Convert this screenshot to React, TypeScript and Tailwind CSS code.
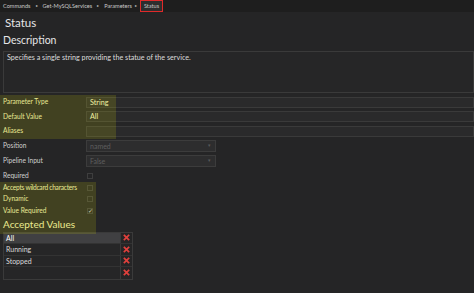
import React from "react";

const font = { fontFamily: 'Lato, "Open Sans", sans-serif' };

function Row({ label, value, hl }: { label: string; value?: string; hl?: boolean }) {
  return (
    <div className="flex items-center h-[14.5px]">
      <div className={`w-[86px] pl-[3px] text-[6.6px] ${hl ? "text-[#e4e4a8]" : "text-[#cfcfcf]"}`}>{label}</div>
      <div className={`flex-1 h-[11px] border border-[#3a3a3a] bg-[#2a2a2b] text-[7.2px] pl-[3px] leading-[9px] ${hl ? "text-[#eeeeb8]" : "text-[#d8d8d8]"}`}>{value}</div>
    </div>
  );
}

function Select({ label, value }: { label: string; value: string }) {
  return (
    <div className="flex items-center h-[15px]">
      <div className="w-[86px] pl-[3px] text-[6.6px] text-[#cfcfcf]">{label}</div>
      <div className="w-[130px] h-[12px] border border-[#3c3c3c] bg-[#2d2d2e] text-[7px] pl-[3px] text-[#5e5e5e] flex items-center justify-between pr-[4px]">
        <span>{value}</span>
        <span className="text-[5px] text-[#5a5a5a]">▾</span>
      </div>
    </div>
  );
}

function Check({ label, checked, hl }: { label: string; checked?: boolean; hl?: boolean }) {
  return (
    <div className="flex items-center h-[11.5px]">
      <div className={`w-[86px] pl-[3px] text-[6.6px] whitespace-nowrap overflow-hidden ${hl ? "text-[#e4e4a8]" : "text-[#cfcfcf]"} ${label.length > 20 ? "tracking-[-0.25px]" : ""}`}>{label}</div>
      <div className="ml-[1px] w-[6px] h-[6px] border border-[#3e3e3e] flex items-center justify-center text-[6px] text-[#cfcfcf] leading-none">
        {checked ? "✓" : ""}
      </div>
    </div>
  );
}

function XIcon() {
  return (
    <svg width="7" height="7" viewBox="0 0 10 10">
      <path d="M2 2 L8 8 M8 2 L2 8" stroke="#e0403c" strokeWidth="2.4" strokeLinecap="square" />
    </svg>
  );
}

export default function App() {
  const values = ["All", "Running", "Stopped", ""];
  return (
    <div className="w-[474px] h-[293px] bg-[#252526] text-[#d4d4d4] overflow-hidden relative" style={font}>
      {/* breadcrumb */}
      <div className="h-[12px] bg-[#1e1e1e] flex items-center text-[5.6px] text-[#c8c8c8] pl-[3px]">
        <span>Commands</span>
        <span className="text-[4px] mx-[5px]">▸</span>
        <span>Get-MySQLServices</span>
        <span className="text-[4px] mx-[5px]">▸</span>
        <span>Parameters</span>
        <span className="text-[4px] mx-[3px]">▸</span>
        <span className="border-[1.5px] border-[#e02a2a] px-[3px] h-[12px] flex items-center bg-[#2e2e2e]">Status</span>
      </div>
      {/* header */}
      <div className="text-[11.5px] leading-[18px] pl-[5px] pt-[2px] text-[#e6e6e6]">Status</div>
      <div className="text-[10.5px] leading-[16px] pl-[3px] text-[#e6e6e6]">Description</div>
      <div className="mt-[3px] ml-[3px] h-[42px] border border-[#3a3a3a] bg-[#262627] text-[7.2px] pl-[3px] pt-[1px] text-[#dcdcdc]">
        Specifies a single string providing the statue of the service.
      </div>
      <div className="mt-[2px] relative">
        <div className="absolute left-0 top-0 w-[116px] h-[44px] bg-[#ffff00]/[0.13] pointer-events-none" />
        <Row label="Parameter Type" value="String" hl />
        <Row label="Default Value" value="All" hl />
        <Row label="Aliases" value="" hl />
        <Select label="Position" value="named" />
        <Select label="Pipeline Input" value="False" />
      </div>
      <div className="mt-[2px] relative">
        <div className="absolute left-0 top-[11px] w-[96px] h-[52px] bg-[#ffff00]/[0.13] pointer-events-none" />
        <Check label="Required" />
        <Check label="Accepts wildcard characters" hl />
        <Check label="Dynamic" hl />
        <Check label="Value Required" checked hl />
        <div className="text-[10px] leading-[15px] pl-[3px] text-[#e8e8a4]">Accepted Values</div>
      </div>
      <div className="ml-[3px] w-[130px] border border-[#3a3a3a]">
        {values.map((v, i) => (
          <div key={i} className="flex h-[11.5px] border-b border-[#333] last:border-b-0">
            <div className={`flex-1 text-[7px] pl-[2px] leading-[11px] ${i === 0 ? "bg-[#404042] text-white" : "bg-[#262627] text-[#dcdcdc]"}`}>{v}</div>
            <div className="w-[12px] flex items-center justify-center border-l border-[#3a3a3a]">
              <XIcon />
            </div>
          </div>
        ))}
      </div>
    </div>
  );
}
